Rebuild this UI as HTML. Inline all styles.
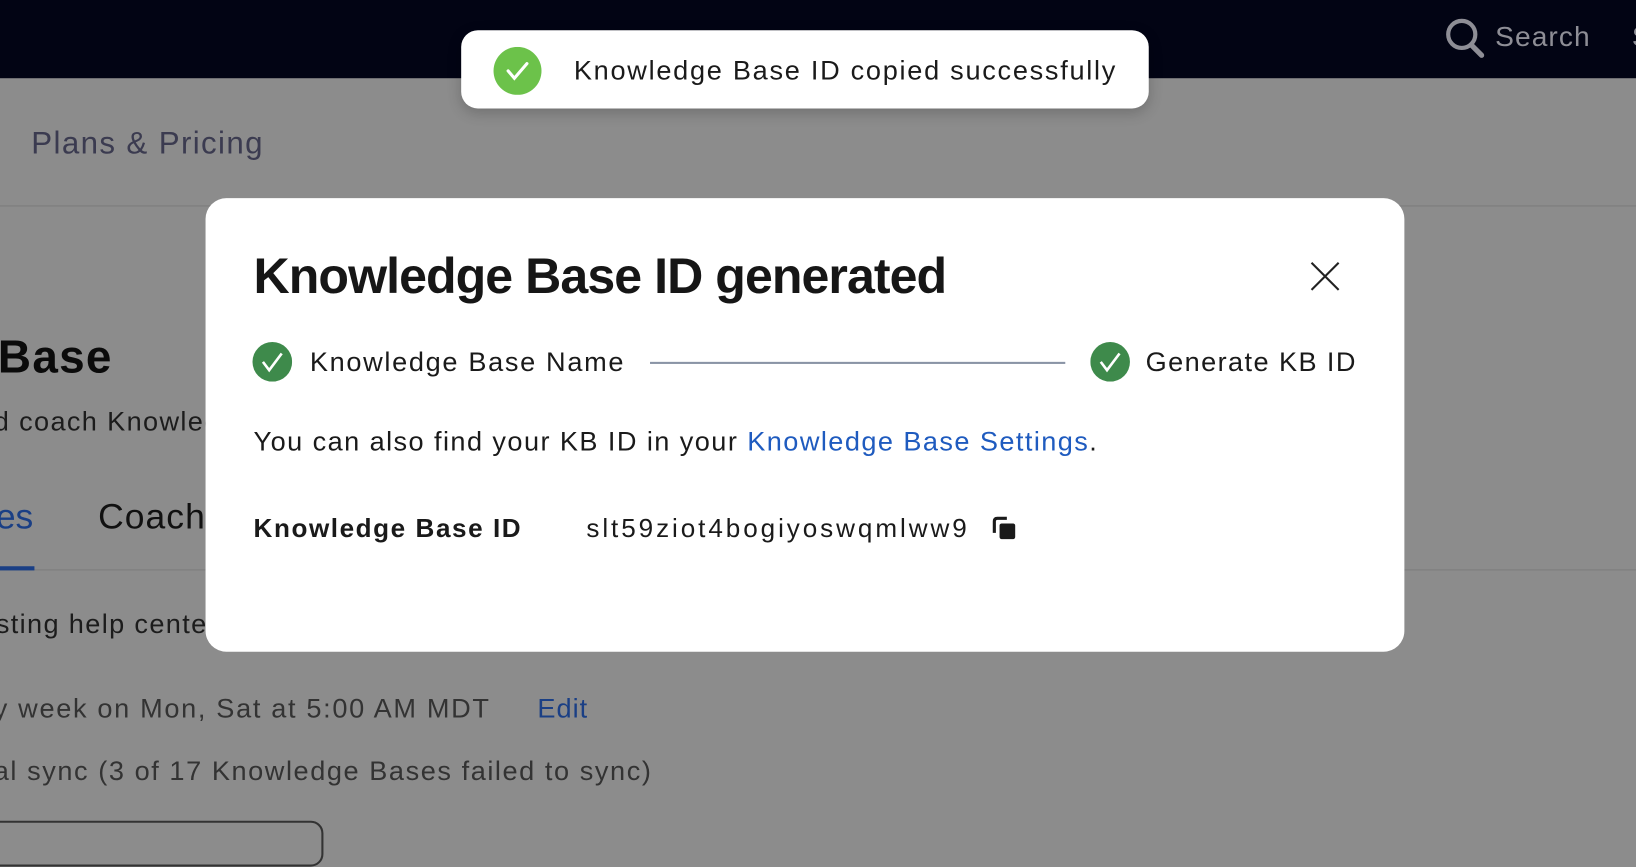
<!DOCTYPE html>
<html><head><meta charset="utf-8"><style>
html,body{margin:0;padding:0;width:1636px;height:828px;overflow:hidden;background:#8c8c8c;font-family:"Liberation Sans",sans-serif;}
#w{position:absolute;left:0;top:0;width:1568px;height:794px;transform:scale(1.04337,1.04282);transform-origin:0 0;background:#8c8c8c;}
.a{position:absolute;white-space:nowrap;line-height:1;}
</style></head><body><div id="w">
<div class="a" style="left:0;top:0;width:1568px;height:75px;background:#020414"></div>
<svg class="a" style="left:1383px;top:16px" width="42" height="40" viewBox="0 0 42 40"><circle cx="18" cy="17" r="13" fill="none" stroke="#8e8e96" stroke-width="4"/><path d="M27 27 L37 37" stroke="#8e8e96" stroke-width="5" stroke-linecap="round"/></svg>
<div class="a" style="left:1433px;top:22px;font-size:27px;color:#8e8e96;letter-spacing:1px">Search</div>
<div class="a" style="left:1564px;top:22px;font-size:27px;color:#8e8e96">S</div>

<div class="a" style="left:30px;top:123px;font-size:30px;color:#3b3b50;letter-spacing:1.3px">Plans &amp; Pricing</div>
<div class="a" style="left:0;top:197px;width:1568px;height:1px;background:#7c7c7c"></div>
<div class="a" style="left:-2px;top:321px;font-size:44px;font-weight:bold;color:#0b0b0b;letter-spacing:1.2px">Base</div>
<div class="a" style="left:-6px;top:391px;font-size:26px;color:#1c1c1c;letter-spacing:1.3px">d coach Knowledge</div>
<div class="a" style="left:-4px;top:479px;font-size:34px;color:#1a3f85">es</div>
<div class="a" style="left:94px;top:479px;font-size:34px;color:#111;letter-spacing:1px">Coach</div>
<div class="a" style="left:0;top:546px;width:1568px;height:1px;background:#7c7c7c"></div>
<div class="a" style="left:0;top:543px;width:33px;height:4px;background:#1a3f85"></div>
<div class="a" style="left:-4px;top:585px;font-size:26px;color:#1c1c1c;letter-spacing:1.3px">sting help center</div>
<div class="a" style="left:-6px;top:666px;font-size:26px;color:#333;letter-spacing:1.6px">y week on Mon, Sat at 5:00 AM MDT</div>
<div class="a" style="left:515px;top:666px;font-size:26px;color:#1a3f85;letter-spacing:1px">Edit</div>
<div class="a" style="left:-6px;top:726px;font-size:26px;color:#333;letter-spacing:1.5px">al sync (3 of 17 Knowledge Bases failed to sync)</div>
<div class="a" style="left:-20px;top:787px;width:326px;height:40px;border:2px solid #333;border-radius:12px"></div>

<div class="a" style="left:442px;top:29px;width:659px;height:75px;background:#fff;border-radius:16px;box-shadow:0 4px 14px rgba(0,0,0,.2)"></div>
<svg class="a" style="left:473px;top:45px" width="46" height="46"><circle cx="23" cy="23" r="23" fill="#6cc24a"/><path d="M14 23 L20 30 L32 16" fill="none" stroke="#fff" stroke-width="3" stroke-linecap="round"/></svg>
<div class="a" style="left:550px;top:54px;font-size:26px;color:#1a1a1a;letter-spacing:1.65px">Knowledge Base ID copied successfully</div>

<div class="a" style="left:197px;top:190px;width:1149px;height:435px;background:#fff;border-radius:20px"></div>
<div class="a" style="left:243px;top:242px;font-size:48px;font-weight:bold;color:#161616;letter-spacing:-0.9px">Knowledge Base ID generated</div>
<svg class="a" style="left:1254px;top:249px" width="32" height="32"><path d="M3 3 L29 29 M29 3 L3 29" stroke="#222" stroke-width="2"/></svg>
<svg class="a" style="left:242px;top:328px" width="38" height="38"><circle cx="19" cy="19" r="19" fill="#3e8a4b"/><path d="M10 19 L16 27 L28 11" fill="none" stroke="#fff" stroke-width="2.5"/></svg>
<div class="a" style="left:297px;top:334px;font-size:26px;color:#1a1a1a;letter-spacing:1.6px">Knowledge Base Name</div>
<div class="a" style="left:623px;top:347px;width:398px;height:2px;background:#8a94a6"></div>
<svg class="a" style="left:1045px;top:328px" width="38" height="38"><circle cx="19" cy="19" r="19" fill="#3e8a4b"/><path d="M10 19 L16 27 L28 11" fill="none" stroke="#fff" stroke-width="2.5"/></svg>
<div class="a" style="left:1098px;top:334px;font-size:26px;color:#1a1a1a;letter-spacing:1.35px">Generate KB ID</div>
<div class="a" style="left:243px;top:410px;font-size:26px;color:#1a1a1a;letter-spacing:1.37px">You can also find your KB ID in your <span style="color:#1f5bbf">Knowledge Base Settings</span>.</div>
<div class="a" style="left:243px;top:495px;font-size:25px;font-weight:bold;color:#1a1a1a;letter-spacing:1.5px">Knowledge Base ID</div>
<div class="a" style="left:562px;top:495px;font-size:25px;color:#1a1a1a;letter-spacing:2.8px">slt59ziot4bogiyoswqmlww9</div>
<svg class="a" style="left:951px;top:495px" width="24" height="24"><path d="M2 16 V5 Q2 2 5 2 H14" fill="none" stroke="#1a1a1a" stroke-width="3"/><rect x="7" y="7" width="15" height="15" rx="2" fill="#1a1a1a"/></svg>
</div></body></html>
